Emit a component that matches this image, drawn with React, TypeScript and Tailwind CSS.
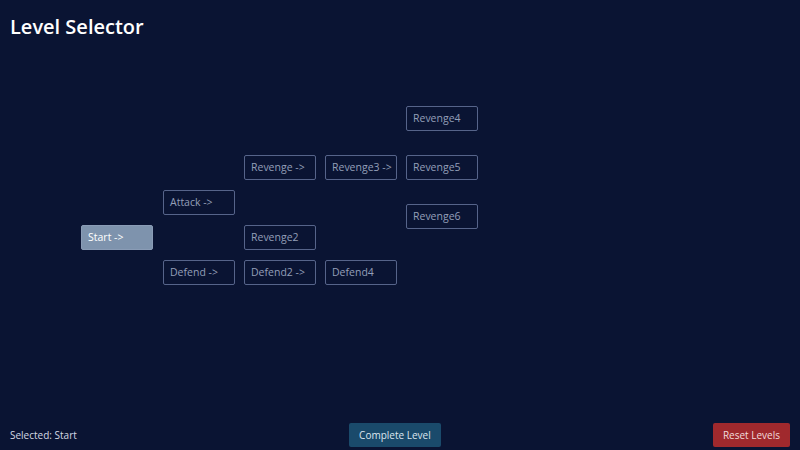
import { useState } from "react";

type Level = {
  id: string;
  label: string;
  x: number;
  y: number;
};

// positions on the tree canvas (canvas top sits at y=48 on the page)
const levels: Level[] = [
  { id: "Start", label: "Start ->", x: 81, y: 177 },
  { id: "Attack", label: "Attack ->", x: 163, y: 142 },
  { id: "Defend", label: "Defend ->", x: 163, y: 212 },
  { id: "Revenge", label: "Revenge ->", x: 244, y: 107 },
  { id: "Revenge2", label: "Revenge2", x: 244, y: 177 },
  { id: "Defend2", label: "Defend2 ->", x: 244, y: 212 },
  { id: "Revenge3", label: "Revenge3 ->", x: 325, y: 107 },
  { id: "Defend4", label: "Defend4", x: 325, y: 212 },
  { id: "Revenge4", label: "Revenge4", x: 406, y: 58 },
  { id: "Revenge5", label: "Revenge5", x: 406, y: 107 },
  { id: "Revenge6", label: "Revenge6", x: 406, y: 156 },
];

const App = () => {
  const [selected, setSelected] = useState<string>("Start");

  return (
    <div
      className="h-screen w-full flex flex-col bg-[#0a1433] text-white overflow-hidden"
      style={{ fontFamily: '"Open Sans", "Noto Sans", sans-serif' }}
    >
      <div className="h-[48px] px-[10px] pt-[12px]">
        <h1 className="text-[20px] leading-[30px] font-semibold text-white">
          Level Selector
        </h1>
      </div>

      <div className="relative flex-1">
        {levels.map((lvl) => {
          const active = lvl.id === selected;
          return (
            <button
              key={lvl.id}
              onClick={() => setSelected(lvl.id)}
              className={
                active
                  ? "absolute w-[72px] h-[25px] pl-[6px] text-left text-[10.5px] rounded-[2px] border-[1.5px] border-[#8a9cb6] bg-[#7e93ad] text-white"
                  : "absolute w-[72px] h-[25px] pl-[6px] text-left text-[10.5px] rounded-[2px] border-[1.5px] border-[#56648a] bg-transparent text-[#939fb8]"
              }
              style={{ left: lvl.x, top: lvl.y }}
            >
              {lvl.label}
            </button>
          );
        })}
      </div>

      <div className="flex items-center justify-between px-[10px] pb-[3px]">
        <span className="text-[10px] text-[#d4d9e4]">Selected: {selected}</span>
        <button className="h-[24px] px-[10px] text-[10px] rounded-[2px] bg-[#1a4a6b] text-[#dce6ef]">
          Complete Level
        </button>
        <button className="h-[24px] px-[10px] text-[10px] rounded-[2px] bg-[#a0292d] text-[#f1dcdc]">
          Reset Levels
        </button>
      </div>
    </div>
  );
};

export default App;
